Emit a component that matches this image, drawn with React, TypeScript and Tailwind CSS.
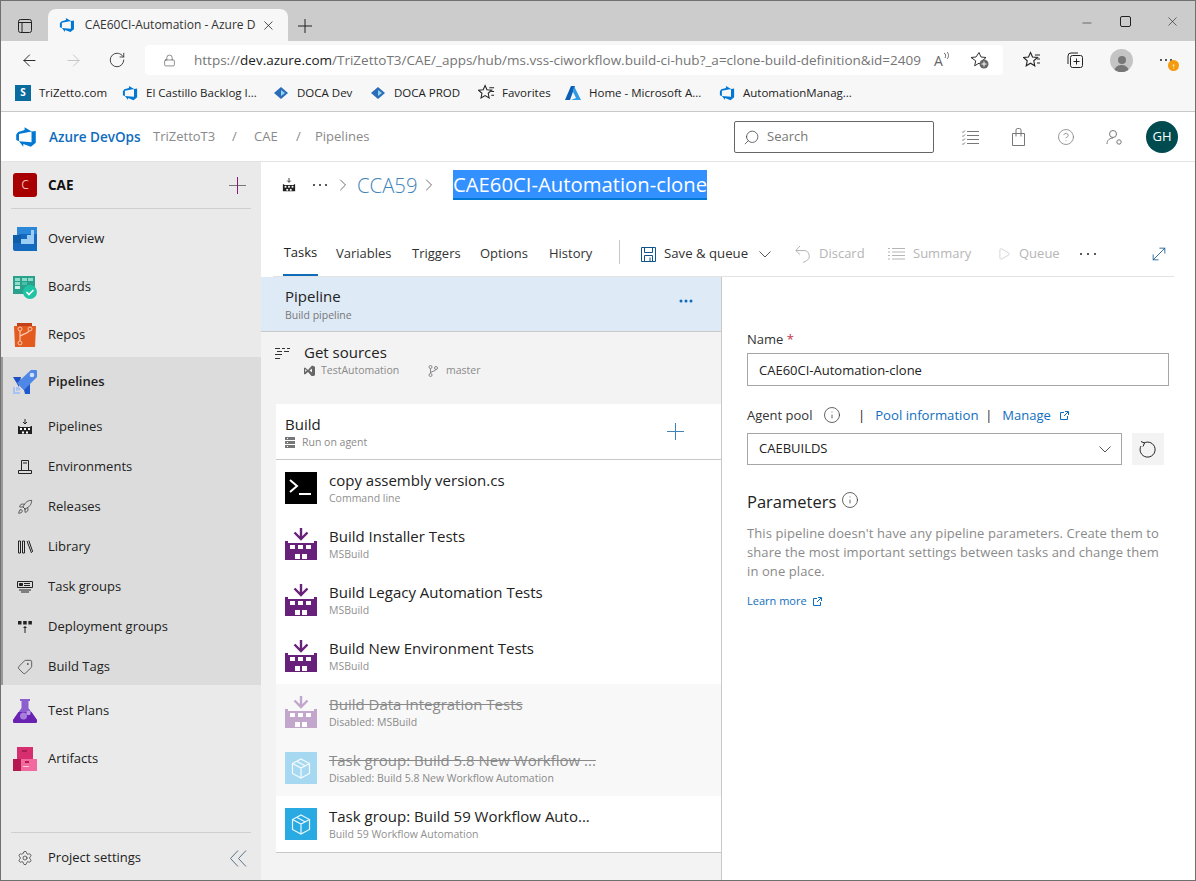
import React from 'react';
import { ArrowLeft, ArrowRight, RotateCw, Lock, X, Minus, Search, ChevronRight, CircleHelp, Info, Rocket, Tag, Settings, Play, MoveDiagonal } from 'lucide-react';

function DevOpsLogo({ size = 16, className = 'text-[#0078d4]' }: { size?: number; className?: string }) {
  return <svg width={size} height={size} viewBox="0 0 18 18" className={className} fill="currentColor">
      <path d="M17 4v9.74l-4 3.28-6.2-2.26V17L3.29 12.41l10.23.8V4.44L17 4zm-3.41.49L7.85 1v2.35L2.58 4.9 1 6.93v4.61l2.26 1V6.57l10.33-2.08z" />
    </svg>;
}

function Cross({ size = 17, color = '#0f6cbd', v }: { size?: number; color?: string; v?: string }) {
  const m = size / 2;
  return <svg width={size} height={size} viewBox={`0 0 ${size} ${size}`} className="shrink-0">
      <path d={`M0 ${m}H${size}`} stroke={color} strokeWidth="1" />
      <path d={`M${m} 0V${size}`} stroke={v || color} strokeWidth="1" />
    </svg>;
}

function Chevron({ w = 12, color = '#555' }: { w?: number; color?: string }) {
  return <svg width={w} height={w / 2 + 1} viewBox="0 0 12 7" fill="none" stroke={color} className="shrink-0"><path d="M.5.5 6 6l5.5-5.5" /></svg>;
}

function Dots({ w = 16, gap = 6, r = 1, color = '#222' }: { w?: number; gap?: number; r?: number; color?: string }) {
  return <svg width={w} height={r * 2 + 1} viewBox={`0 0 ${w} ${r * 2 + 1}`} fill={color} className="shrink-0">
      <circle cx={r} cy={r} r={r} />
      <circle cx={r + gap} cy={r} r={r} />
      <circle cx={r + gap * 2} cy={r} r={r} />
    </svg>;
}

function MsBuildIcon({ size = 32, color = '#68217a' }: { size?: number; color?: string }) {
  return <svg width={size} height={size} viewBox="0 0 32 32">
      <path d="M16 0v10M9.5 4.5 16 11l6.5-6.5" stroke={color} strokeWidth="2.4" fill="none" />
      <path d="M0 13h3v2h26v-2h3v19H0z" fill={color} />
      <g fill="#fff">
        <rect x="5" y="17" width="5" height="4" />
        <rect x="13" y="17" width="5" height="4" />
        <rect x="21" y="17" width="5" height="4" />
        <rect x="10" y="26" width="5" height="5" />
        <rect x="17" y="26" width="5" height="5" />
      </g>
    </svg>;
}

function CommandIcon() {
  return <svg width="32" height="32" viewBox="0 0 32 32">
      <rect width="32" height="32" fill="#000" />
      <path d="M5 8l7 6-7 6" stroke="#fff" strokeWidth="2" fill="none" />
      <path d="M14 22h12" stroke="#fff" strokeWidth="2" />
    </svg>;
}

function CubeIcon({ bg }: { bg: string }) {
  return <svg width="32" height="32" viewBox="0 0 32 32">
      <rect width="32" height="32" fill={bg} />
      <path d="M16 7l8.5 4.5v10L16 26l-8.5-4.5v-10zM7.5 11.5 16 16l8.5-4.5M16 16v10M12 9.5l8.5 4.5" stroke="#fff" strokeWidth="1.2" fill="none" opacity="0.9" />
    </svg>;
}

function FactorySmall({ size = 16 }: { size?: number }) {
  return <svg width={size} height={size} viewBox="0 0 16 16">
      <path d="M8 0v4.5M6 3l2 2 2-2" stroke="#222" strokeWidth="1" fill="none" />
      <path d="M1 7h1.5v1h11V7H15v8H1z" fill="#222" />
      <g fill="#fff">
        <rect x="3" y="9" width="2" height="2" />
        <rect x="7" y="9" width="2" height="2" />
        <rect x="11" y="9" width="2" height="2" />
        <rect x="5" y="12.5" width="2" height="2" />
        <rect x="9" y="12.5" width="2" height="2" />
      </g>
    </svg>;
}

function OverviewIcon() {
  return <svg width="24" height="24" viewBox="0 0 24 24">
      <path d="M4 0h20v24H4z" fill="#2b88d8" />
      <path d="M0 8h6v-1h18v17H2a2 2 0 0 1-2-2z" fill="#1568bd" />
      <path d="M0 8h8v8H0z" fill="#0f5ca8" />
      <path d="M8 12h6V8h4V3h3v14H8z" fill="#9ccdf5" />
      <path d="M14 19h10v5H14z" fill="#0f6cc0" />
    </svg>;
}

function BoardsIcon() {
  return <svg width="24" height="24" viewBox="0 0 24 24">
      <rect y="1" width="22" height="18" fill="#2aa18c" />
      <g fill="#8fdcc8">
        <rect x="2" y="3" width="5" height="3" />
        <rect x="9" y="3" width="5" height="3" />
        <rect x="15" y="3" width="5" height="3" />
        <rect x="2" y="7" width="5" height="3" />
        <rect x="9" y="7" width="5" height="3" fill="#4bbfa6" />
        <rect x="2" y="11" width="5" height="3" fill="#c8f0e5" />
      </g>
      <circle cx="17" cy="17" r="7" fill="#1fc4a5" />
      <path d="M13.5 17l2.5 2.5 4.5-4.5" stroke="#fff" strokeWidth="1.6" fill="none" />
    </svg>;
}

function ReposIcon() {
  return <svg width="24" height="24" viewBox="0 0 24 24">
      <path d="M4 0h15v3H4z" fill="#c2401a" />
      <path d="M1 3h22l-1 21H2z" fill="#e35b1e" />
      <path d="M7 6v12M17 6c0 5-10 5-10 8" stroke="#f8c9b2" strokeWidth="1.2" fill="none" />
      <circle cx="7" cy="6" r="2" fill="#e35b1e" stroke="#f8c9b2" />
      <circle cx="17" cy="6" r="2" fill="#e35b1e" stroke="#f8c9b2" />
      <circle cx="7" cy="20" r="2" fill="#e35b1e" stroke="#f8c9b2" />
    </svg>;
}

function PipelinesIcon() {
  return <svg width="24" height="24" viewBox="0 0 24 24">
      <path d="M0 7h8L6 17z" fill="#1f4fc4" />
      <path d="M7 16l10-7v15H12l-1-4z" fill="#1f58d0" />
      <path d="M18 0h5a1 1 0 0 1 1 1v6L11 20l-7-7z" fill="#4f87e6" />
      <circle cx="19" cy="5" r="2.3" fill="#cfe0fa" />
      <path d="M0 17h2v5h5v2H0zM3 17h3l2 3-5 1z" fill="#a9c4f2" />
    </svg>;
}

function TestPlansIcon() {
  return <svg width="24" height="24" viewBox="0 0 24 24">
      <path d="M7 0h10v2h-1.500v7l8.500 12a2 2 0 0 1-1.500 3h-21a2 2 0 0 1-1.500-3L8.500 9V2H7z" fill="#8c5fd0" />
      <path d="M5.500 13h13l5.500 8a2 2 0 0 1-1.500 3h-21a2 2 0 0 1-1.500-3z" fill="#6a22b3" />
      <circle cx="10.500" cy="17" r="3.500" fill="#a67fdc" />
      <circle cx="15.500" cy="14" r="2.200" fill="#b89ae4" />
    </svg>;
}

function ArtifactsIcon() {
  return <svg width="24" height="24" viewBox="0 0 24 24">
      <rect x="4" width="16" height="13" fill="#d62e6e" />
      <rect x="9" y="3" width="5" height="2" fill="#a81d52" />
      <rect y="12" width="8" height="12" fill="#b5174f" />
      <rect x="8" y="12" width="16" height="12" fill="#f1699e" />
      <rect x="12" y="14" width="4" height="2" fill="#b5174f" />
      <rect x="10" y="19" width="6" height="1" fill="#fbc7da" />
    </svg>;
}

function EnvIcon() {
  return <svg width="16" height="16" viewBox="0 0 16 16" fill="none" stroke="#222" strokeWidth="1">
      <path d="M4.500 1.500h7v10h-7zM1.500 14.500v-3h13v3z" />
      <path d="M6 4h4" />
    </svg>;
}

function LibraryIcon() {
  return <svg width="16" height="16" viewBox="0 0 16 16" fill="none" stroke="#222" strokeWidth="1">
      <path d="M1.500 2h2v12h-2zM5.500 2h2v12h-2zM10 2l4.500 12" />
      <path d="M11.800 1.500l4 11.500" />
    </svg>;
}

function TaskGroupIcon() {
  return <svg width="16" height="16" viewBox="0 0 16 16" fill="none" stroke="#222" strokeWidth="1">
      <path d="M.5 2.500h15v6H.5z" />
      <path d="M2.500 4.500h3v2h-3z" fill="#222" />
      <path d="M7 4.500h6M7 6.500h6M2 11h12M4 13h8" />
    </svg>;
}

function DeployIcon() {
  return <svg width="16" height="16" viewBox="0 0 16 16" fill="#222">
      <rect x="1" y="2" width="3.500" height="3.500" />
      <rect x="6.200" y="2" width="3.500" height="3.500" />
      <rect x="11.400" y="2" width="3.500" height="3.500" />
      <path d="M8 7l2 2H8.500v5h-1V9H6z" />
    </svg>;
}

function FavLines({ size = 18 }: { size?: number }) {
  return <svg width={size} height={size} viewBox="0 0 18 18" fill="none" stroke="#222" strokeWidth="1.100">
      <path d="M7.500 1.500l2 4.500 5 .5-3.700 3.300 1 5-4.300-2.600-4.300 2.600 1-5L.5 6.500l5-.5z" />
      <path d="M12 4h5M14 8h3M14 12h3" />
    </svg>;
}

function ExtLink({ size = 9 }: { size?: number }) {
  return <svg width={size} height={size} viewBox="0 0 9 9" fill="none" stroke="#106ebe" className="shrink-0"><path d="M4 1.500H.5v7h7V5M4 5l4-4M5 .5h3.500V4" /></svg>;
}

function NavItem({ icon, label }: { icon: React.ReactNode; label: string }) {
  return <div className="flex items-center h-12 pl-3">
      <span className="w-[35px] flex">{icon}</span>
      <span className="text-[13px] text-[#222]">{label}</span>
    </div>;
}

function SubNavItem({ icon, label }: { icon: React.ReactNode; label: string }) {
  return <div className="flex items-center h-10 pl-[14px]">
      <span className="w-[31px] flex">{icon}</span>
      <span className="text-[13px] text-[#222]">{label}</span>
    </div>;
}

function Sidebar() {
  return <aside className="w-[260px] shrink-0 bg-[#eaeaea] flex flex-col">
      <div className="flex items-center h-[46px] pl-3 pr-[15px]">
        <span className="w-6 h-6 rounded-[3px] bg-[#a80000] text-[#f3b7b7] text-xs flex items-center justify-center">C</span>
        <span className="ml-[11px] text-[13.5px] font-bold text-[#111] flex-1">CAE</span>
        <Cross size={17} color="#777" v="#8a1a7a" />
      </div>
      <div className="mx-[10px] h-px bg-[#d0d0d0]" />
      <div className="h-[6px]" />
      <NavItem icon={<OverviewIcon />} label="Overview" />
      <NavItem icon={<BoardsIcon />} label="Boards" />
      <div className="h-[46px]"><NavItem icon={<ReposIcon />} label="Repos" /></div>
      <div className="h-[328px] bg-[#dcdcdc] border-l-2 border-[#999]">
        <div className="flex items-center h-[50px] pl-[10px]">
          <span className="w-[35px] flex"><PipelinesIcon /></span>
          <span className="text-[13px] font-semibold text-[#222]">Pipelines</span>
        </div>
        <SubNavItem icon={<FactorySmall />} label="Pipelines" />
        <SubNavItem icon={<EnvIcon />} label="Environments" />
        <SubNavItem icon={<Rocket size={16} strokeWidth={1} className="text-[#222]" />} label="Releases" />
        <SubNavItem icon={<LibraryIcon />} label="Library" />
        <SubNavItem icon={<TaskGroupIcon />} label="Task groups" />
        <SubNavItem icon={<DeployIcon />} label="Deployment groups" />
        <SubNavItem icon={<Tag size={16} strokeWidth={1} className="text-[#222] -scale-x-100" />} label="Build Tags" />
      </div>
      <div className="h-[2px]" />
      <NavItem icon={<TestPlansIcon />} label="Test Plans" />
      <NavItem icon={<ArtifactsIcon />} label="Artifacts" />
      <div className="flex-1" />
      <div className="mx-[10px] h-px bg-[#d0d0d0]" />
      <div className="flex items-center h-[47px] pt-[3px] pl-4 pr-[14px]">
        <Settings size={16} strokeWidth={1} className="text-[#222]" />
        <span className="ml-[15px] text-[13px] text-[#222] flex-1">Project settings</span>
        <svg width="17" height="17" viewBox="0 0 17 17" fill="none" stroke="#5a7184"><path d="M8 .5.5 8.500 8 16.500M16 .5 8.500 8.500l7.500 8" /></svg>
      </div>
    </aside>;
}

function TaskRow({ icon, title, sub, disabled }: { icon: React.ReactNode; title: string; sub: string; disabled?: boolean }) {
  return <div className={`flex items-center h-14 pl-[9px] ${disabled ? 'bg-[#f8f8f8]' : 'bg-white'}`}>
      <span className="w-[44px] flex">{icon}</span>
      <div className="flex flex-col">
        <span className={`text-[15px] leading-[19px] whitespace-nowrap ${disabled ? 'line-through text-[#8a8a8a]' : 'text-[#222]'}`}>{title}</span>
        <span className={`text-[10.5px] leading-[15px] mt-px ${disabled ? 'text-[#8a8a8a]' : 'text-[#8f8f8f]'}`}>{sub}</span>
      </div>
    </div>;
}

function TasksPanel() {
  return <div className="w-[461px] shrink-0 bg-[#f3f3f3] border-r border-[#c8c8c8] flex flex-col">
      <div className="flex items-center justify-between h-[55px] bg-[#deeaf6] border-b border-[#c8c8c8] pl-6 pr-[28px]">
        <div className="flex flex-col">
          <span className="text-[15px] leading-5 text-[#222]">Pipeline</span>
          <span className="text-[10.5px] leading-[15px] mt-[2px] text-[#777]">Build pipeline</span>
        </div>
        <svg width="14" height="4" viewBox="0 0 14 4" fill="#0f6cbd" className="-mt-[6px]"><circle cx="2" cy="2" r="1.500" /><circle cx="7" cy="2" r="1.500" /><circle cx="12" cy="2" r="1.500" /></svg>
      </div>
      <div className="flex h-[72px] pl-[14px] pt-[10px]">
        <svg width="15" height="15" viewBox="0 0 15 15" fill="none" stroke="#333" className="mt-[3px] shrink-0"><path d="M0 3.500h5M7 3.500h3M12 3.500h3M2 6.500h5M9 6.500h5M0 9.500h7M0 13.500h5" /></svg>
        <div className="ml-[14px] flex flex-col">
          <span className="text-[15px] leading-5 text-[#222]">Get sources</span>
          <div className="flex items-center text-[10.5px] leading-[15px] text-[#8a8a8a] mt-[1px]">
            <svg width="11" height="11" viewBox="0 0 11 11" className="mr-[6px]"><path d="M0 3l1-.5 3 2.500 4-4.500 3 1.200v8.600l-3 1.200-4-4.500-3 2.500-1-.5zM8 3.500 5.500 5.500 8 7.500zM1.200 4v3l1.600-1.500z" fill="#666" /></svg>
            <span className="w-[107px]">TestAutomation</span>
            <svg width="10" height="12" viewBox="0 0 10 12" fill="none" stroke="#888" className="mr-2"><circle cx="2.500" cy="2" r="1.500" /><circle cx="2.500" cy="10" r="1.500" /><circle cx="8" cy="3" r="1.500" /><path d="M2.500 3.500v5M8 4.500c0 2-5.500 1.500-5.500 3.500" /></svg>
            <span>master</span>
          </div>
        </div>
      </div>
      <div className="ml-[15px] bg-white">
        <div className="flex items-center justify-between h-[56px] border-b border-[#c8c8c8] pl-[9px] pr-[37px]">
          <div className="flex flex-col">
            <span className="text-[15px] leading-5 text-[#222]">Build</span>
            <div className="flex items-center text-[10.5px] leading-[15px] mt-px text-[#8a8a8a]">
              <svg width="10" height="11" viewBox="0 0 10 11" className="mr-[7px]" fill="#777"><path d="M0 0h10v3H0zM0 4h10v3H0zM0 8h10v3H0z" /><path d="M2 1h1v1H2zM2 5h1v1H2zM2 9h1v1H2z" fill="#fff" /></svg>
              <span>Run on agent</span>
            </div>
          </div>
          <Cross size={17} color="#3f83b8" />
        </div>
        <div className="border-b border-[#c8c8c8]">
          <TaskRow icon={<CommandIcon />} title="copy assembly version.cs" sub="Command line" />
          <TaskRow icon={<MsBuildIcon />} title="Build Installer Tests" sub="MSBuild" />
          <TaskRow icon={<MsBuildIcon />} title="Build Legacy Automation Tests" sub="MSBuild" />
          <TaskRow icon={<MsBuildIcon />} title="Build New Environment Tests" sub="MSBuild" />
          <TaskRow icon={<MsBuildIcon color="#c3a6cb" />} title="Build Data Integration Tests" sub="Disabled: MSBuild" disabled />
          <TaskRow icon={<CubeIcon bg="#a6d9f1" />} title="Task group: Build 5.8 New Workflow ..." sub="Disabled: Build 5.8 New Workflow Automation" disabled />
          <TaskRow icon={<CubeIcon bg="#29aae3" />} title="Task group: Build 59 Workflow Auto..." sub="Build 59 Workflow Automation" />
        </div>
      </div>
    </div>;
}

function DetailsPanel() {
  return <div className="flex-1 bg-white pl-[25px] pr-[26px] pt-[52px]">
      <div className="text-[13px] leading-5 text-[#333]">Name <span className="text-[#c4314b]">*</span></div>
      <div className="mt-1 h-[33px] border border-[#a6a6a6] flex items-center pl-[11px] pt-[2px] text-[13px] text-[#222]">CAE60CI-Automation-clone</div>
      <div className="mt-[19px] flex items-center text-[13px] leading-5 h-5">
        <span className="w-[76px] text-[#333]">Agent pool</span>
        <Info size={18} strokeWidth={1} className="text-[#333]" />
        <span className="ml-[17px] text-[#222]">|</span>
        <span className="ml-[10px] w-[110px] text-[13.2px] text-[#106ebe]">Pool information</span>
        <span className="text-[#222]">|</span>
        <span className="ml-[10px] w-[58px] text-[#106ebe]">Manage</span>
        <ExtLink size={9} />
      </div>
      <div className="mt-[8px] flex">
        <div className="w-[375px] h-8 border border-[#a6a6a6] flex items-center justify-between pl-[11px] pr-[10px] text-[13px] text-[#222]">
          <span>CAEBUILDS</span>
          <Chevron />
        </div>
        <div className="ml-[10px] w-8 h-8 bg-[#f3f3f3] flex items-center justify-center">
          <svg width="18" height="18" viewBox="0 0 18 18" fill="none" stroke="#222"><path d="M5 3a7.500 7.500 0 1 1-3 3" /><path d="M2 1.500 5.500 3 4 6.500" /></svg>
        </div>
      </div>
      <div className="mt-[24px] flex items-start h-[26px]">
        <span className="text-[16.5px] leading-[26px] text-[#222]">Parameters</span>
        <Info size={18} strokeWidth={1} className="ml-[5px] mt-[2px] text-[#333]" />
      </div>
      <p className="mt-[9px] w-[418px] text-[13px] tracking-[0.1px] leading-[19px] text-[#8a8a8a]">This pipeline doesn't have any pipeline parameters. Create them to share the most important settings between tasks and change them in one place.</p>
      <div className="mt-[12px] flex items-center text-[11px] leading-4 text-[#106ebe]">
        <span>Learn more</span>
        <span className="ml-[6px] flex"><ExtLink /></span>
      </div>
    </div>;
}

function Main() {
  return <main className="flex-1 flex flex-col min-w-0 bg-white">
      <div className="h-[78px] flex items-start pt-[8px] pl-[21px]">
        <div className="flex items-center h-[30px]">
          <FactorySmall size={14} />
          <span className="ml-[17px] w-[19px] flex"><Dots w={16} gap={6} r={1} /></span>
          <ChevronRight size={20} strokeWidth={1} className="ml-px text-[#555]" />
          <span className="ml-[4px] w-[64px] text-[20.3px] text-[#3f83b8] font-light">CCA59</span>
          <ChevronRight size={20} strokeWidth={1} className="-ml-[2px] text-[#555]" />
          <span className="ml-[14px] h-[30px] flex items-center bg-[#3390ff] text-white text-[20.3px] border-b-2 border-[#0078d4] whitespace-nowrap">CAE60CI-Automation-clone</span>
        </div>
      </div>
      <div className="h-[37px] ml-3 mr-[21px] border-b border-[#e3e3e3] flex items-stretch text-[13px] text-[#333]">
        <div className="w-[10px]" />
        <span className="w-[35px] mr-[18px] pb-2 flex items-center justify-center border-b-2 border-[#0f6cbd] text-[#222] font-medium">Tasks</span>
        <span className="w-[76px] pb-2 flex items-center">Variables</span>
        <span className="w-[68px] pb-2 flex items-center">Triggers</span>
        <span className="w-[69px] pb-2 flex items-center">Options</span>
        <span className="w-[70px] pb-2 flex items-center">History</span>
        <div className="flex items-start w-[22px]"><div className="w-px h-6 bg-[#c8c8c8]" /></div>
        <div className="flex items-center pb-2 w-[154px]">
          <svg width="15" height="15" viewBox="0 0 15 15" fill="none" stroke="#0f548c"><path d="M.5.5h14v14H.5zM3.500.5v5h8v-5M3.500 14.500v-6h8v6M9 10.500v4" /></svg>
          <span className="ml-2 w-[95px] text-[13.2px]">Save &amp; queue</span>
          <Chevron color="#555" />
        </div>
        <div className="flex items-center pb-2 w-[93px] text-[#b5b5b5]">
          <svg width="16" height="18" viewBox="0 0 16 18" fill="none" stroke="#b5b5b5"><path d="M1 5.500h8a5.500 5.500 0 0 1 2 10.500l-3 1.500M5 1 .8 5.500 5 9.500" /></svg>
          <span className="ml-2">Discard</span>
        </div>
        <div className="flex items-center pb-2 w-[109px] text-[#b5b5b5]">
          <svg width="17" height="12" viewBox="0 0 17 12" fill="none" stroke="#b5b5b5"><path d="M0 .5h2M4 .5h13M0 4h2M4 4h13M0 7.500h2M4 7.500h13M0 11h2M4 11h13" /></svg>
          <span className="ml-2">Summary</span>
        </div>
        <div className="flex items-center pb-2 w-[83px] text-[#b5b5b5]">
          <Play size={14} strokeWidth={1} />
          <span className="ml-2">Queue</span>
        </div>
        <span className="flex items-center pb-2 w-[71px]"><Dots w={18} gap={7} r={1} /></span>
        <span className="flex items-center pb-2 -ml-[2px]"><MoveDiagonal size={20} strokeWidth={1} className="text-[#0f548c]" /></span>
      </div>
      <div className="flex-1 flex min-h-0">
        <TasksPanel />
        <DetailsPanel />
      </div>
    </main>;
}

const diamond = <svg width="16" height="16" viewBox="0 0 16 16"><path d="M8 2l7 6-7 6-7-6z" fill="#2b6cb8" /><path d="M8 5l4 3-4 3z" fill="#8fd3ee" /></svg>;

const bookmarks = [
  { w: 'w-[107px]', label: 'TriZetto.com', icon: <span className="w-4 h-4 bg-[#0b6a9e] text-white text-[10px] font-bold flex items-center justify-center">S</span> },
  { w: 'w-[151px]', label: 'El Castillo Backlog I...', icon: <DevOpsLogo /> },
  { w: 'w-[97px]', label: 'DOCA Dev', icon: diamond },
  { w: 'w-[108px]', label: 'DOCA PROD', icon: diamond },
  { w: 'w-[87px]', label: 'Favorites', icon: <FavLines size={17} /> },
  { w: 'w-[154px]', label: 'Home - Microsoft A...', icon: <svg width="17" height="16" viewBox="0 0 17 16"><path d="M6 1h4L5 15H0z" fill="#0a5fb4" /><path d="M9 1l7 14H6l5-2-3-6z" fill="#2f9be8" /></svg> },
  { w: 'w-[130px]', label: 'AutomationManag...', icon: <DevOpsLogo /> },
];

export default function App() {
  return <div className="w-[1196px] h-[881px] overflow-hidden border border-[#707070] flex flex-col font-['Open_Sans',sans-serif]">
      {/* tab strip */}
      <div className="h-10 shrink-0 bg-[#cccccc] flex items-end">
        <svg width="16" height="16" viewBox="0 0 16 16" fill="none" stroke="#222" className="ml-4 mb-[7px]"><rect x="1.500" y="1.500" width="13" height="13" rx="2" /><path d="M1.500 4.500h13M5 4.500v10" /></svg>
        <div className="ml-[15px] w-[240px] h-8 bg-[#f7f7f7] rounded-t-lg flex items-center pl-[11px] pr-3">
          <DevOpsLogo size={16} />
          <span className="ml-[10px] w-[173px] overflow-hidden whitespace-nowrap text-[12px] text-[#333]">CAE60CI-Automation - Azure De</span>
          <X size={15} strokeWidth={1.3} className="ml-[5px] text-[#222]" />
        </div>
        <span className="ml-[10px] mb-[8px]"><Cross size={14} color="#222" /></span>
        <div className="flex-1" />
        <Minus size={14} strokeWidth={1} className="mb-[11px] text-[#222]" />
        <svg width="11" height="11" viewBox="0 0 11 11" fill="none" stroke="#222" className="ml-[26px] mb-[14px]"><rect x=".5" y=".5" width="10" height="10" rx="1.500" /></svg>
        <X size={15} strokeWidth={1} className="ml-[34px] mr-[15px] mb-[12px] text-[#222]" />
      </div>
      {/* toolbar */}
      <div className="h-[38px] shrink-0 bg-[#f7f7f7] flex items-center pl-[19px]">
        <ArrowLeft size={19} strokeWidth={1.2} className="text-[#222]" />
        <ArrowRight size={19} strokeWidth={1.2} className="ml-[25px] text-[#c2c2c2]" />
        <RotateCw size={18} strokeWidth={1.2} className="ml-[25px] text-[#333]" />
        <div className="ml-[19px] w-[858px] h-[30px] bg-white rounded-[4px] flex items-center pl-[18px] pr-[12px]">
          <Lock size={13} strokeWidth={1} className="text-[#333]" />
          <span className="ml-[18px] w-[740px] whitespace-nowrap text-[13.5px] text-[#757575]">https://<span className="text-[#222]">dev.azure.com</span>/TriZettoT3/CAE/_apps/hub/ms.vss-ciworkflow.build-ci-hub?_a=clone-build-definition&amp;id=2409</span>
          <span className="w-[37px] flex items-center text-[14px] text-[#666]">A<svg width="7" height="9" viewBox="0 0 7 9" fill="none" stroke="#666" className="-mt-[8px]"><path d="M1 1c2 1 2 3 1 5M4 0c2 2 2 5 0 7" /></svg></span>
          <svg width="18" height="18" viewBox="0 0 18 18" className="shrink-0"><path d="M8 1.500l2 4.500 5 .5-3.700 3.300 1 5-4.300-2.600-4.300 2.600 1-5L0 6.500l5-.5z" fill="none" stroke="#333" /><circle cx="13" cy="13" r="4.500" fill="#666" /><path d="M13 10.500v5M10.500 13h5" stroke="#fff" /></svg>
        </div>
        <span className="ml-[20px] flex"><FavLines /></span>
        <svg width="18" height="18" viewBox="0 0 18 18" fill="none" stroke="#222" className="ml-[25px]"><rect x="4.500" y="4.500" width="12" height="12" rx="2" /><path d="M10.500 7.500v6M7.500 10.500h6M2 13V5a3 3 0 0 1 3-3h7" /></svg>
        <span className="ml-[26px] w-[23px] h-[23px] rounded-full bg-[#c4c4c4] flex flex-col items-center justify-end overflow-hidden"><span className="w-2 h-2 mb-px rounded-full bg-[#777]" /><span className="w-[15px] h-[7px] bg-[#777] rounded-t-full" /></span>
        <span className="relative ml-[27px] flex"><Dots w={14} gap={5} r={1} />
          <span className="absolute left-[8px] top-[1px] w-[11px] h-[11px] rounded-full bg-[#f49b0e] text-white text-[8px] leading-[11px] text-center">↑</span>
        </span>
      </div>
      {/* bookmarks */}
      <div className="h-[33px] shrink-0 bg-[#f7f7f7] border-b border-[#c8c8c8] pb-[5px] flex items-center pl-[14px] text-[11.5px] text-[#222]">
        {bookmarks.map((b, i) => <div key={i} className={`${b.w} flex items-center`}>
            <span className="w-[24px] shrink-0 flex">{b.icon}</span>
            <span className="whitespace-nowrap">{b.label}</span>
          </div>)}
      </div>
      {/* azure devops header */}
      <div className="h-[49px] shrink-0 bg-white flex items-center pt-px pl-[14px] text-[13px] text-[#8a8a8a]">
        <DevOpsLogo size={22} />
        <span className="ml-3 w-[104px] font-semibold text-[13.5px] text-[#0f6cbd]">Azure DevOps</span>
        <span className="w-[79px]">TriZettoT3</span>
        <span className="w-[22px]">/</span>
        <span className="w-[42px]">CAE</span>
        <span className="w-[19px]">/</span>
        <span className="w-[419px]">Pipelines</span>
        <div className="w-[200px] h-8 border border-[#666] rounded-[2px] flex items-center pl-2 text-[#777]">
          <Search size={17} strokeWidth={1} className="-scale-x-100 text-[#333]" />
          <span className="ml-[7px]">Search</span>
        </div>
        <svg width="17" height="15" viewBox="0 0 17 15" fill="none" stroke="#777" className="ml-[28px]"><path d="M5 1.500h12M5 5.500h12M5 9.500h12M5 13.500h12M0 1.500l1 1 2-2M0 5.500l1 1 2-2M0 9.500l1 1 2-2M0 13.500l1 1 2-2" /></svg>
        <svg width="15" height="18" viewBox="0 0 15 18" fill="none" stroke="#777" className="ml-[32px]"><path d="M1.500 5.500h12v12h-12zM5 5.500V2a1.500 1.500 0 0 1 1.500-1.500h2A1.500 1.500 0 0 1 10 2v3.500M5 5.500v3M10 5.500v3" /></svg>
        <CircleHelp size={18} strokeWidth={1} className="ml-[31px] text-[#777]" />
        <svg width="17" height="17" viewBox="0 0 17 17" fill="none" stroke="#777" className="ml-[31px]"><circle cx="7" cy="5" r="3.500" /><path d="M1 15c0-4 3-6 6-6" /><circle cx="13" cy="13" r="2.200" /></svg>
        <span className="ml-[23px] w-8 h-8 rounded-full bg-[#004b50] text-white text-[13px] flex items-center justify-center">GH</span>
      </div>
      <div className="flex-1 flex min-h-0 border-t border-[#e3e3e3]">
        <Sidebar />
        <Main />
      </div>
    </div>;
}
